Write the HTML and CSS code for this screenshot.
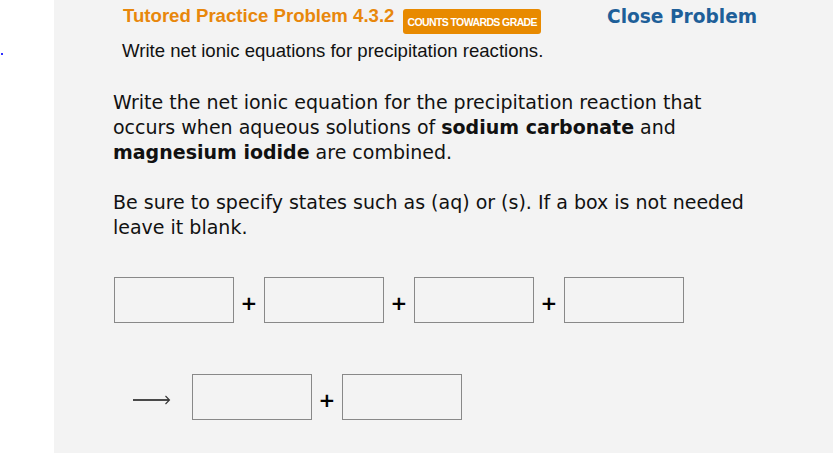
FILE: index.html
```html
<!DOCTYPE html>
<html>
<head>
<meta charset="utf-8">
<link rel="stylesheet" href="styles.css">
</head>
<body>
<div class="page">
  <div class="gutter"><span class="dot"></span></div>
  <main class="panel">
    <header class="head">
      <div class="title-group">
        <h1 class="title">Tutored Practice Problem 4.3.2</h1>
        <span class="badge">COUNTS TOWARDS GRADE</span>
      </div>
      <a class="close">Close Problem</a>
    </header>
    <p class="sub">Write net ionic equations for precipitation reactions.</p>
    <section class="question">
      <p>Write the net ionic equation for the precipitation reaction that occurs when aqueous solutions of <b>sodium carbonate</b> and <b>magnesium iodide</b> are combined.</p>
      <p>Be sure to specify states such as (aq) or (s). If a box is not needed leave it blank.</p>
    </section>
    <div class="eq-row reactants">
      <span class="box"></span><span class="plus">+</span><span class="box"></span><span class="plus">+</span><span class="box"></span><span class="plus">+</span><span class="box"></span>
    </div>
    <div class="eq-row products">
      <svg class="arrow" width="38" height="10" viewBox="0 0 38 10"><line x1="0" y1="5" x2="36" y2="5" stroke="#111" stroke-width="1.4"/><path d="M32.5 1 L36.5 5 L32.5 9" fill="none" stroke="#333" stroke-width="1.1"/></svg>
      <span class="box"></span><span class="plus">+</span><span class="box"></span>
    </div>
  </main>
</div>
</body>
</html>
```

FILE: styles.css
```css
html, body {
  margin: 0;
  padding: 0;
  background: #ffffff;
}
.page {
  display: flex;
  width: 833px;
  height: 453px;
  overflow: hidden;
}
.gutter {
  width: 54px;
  flex: none;
  padding-top: 53px;
  box-sizing: border-box;
}
.dot {
  display: block;
  width: 2px;
  height: 2px;
  margin-left: 1px;
  background: #3030ff;
}
.panel {
  flex: 1;
  background: #f3f3f3;
  padding-left: 59px;
  box-sizing: border-box;
}
.head {
  display: flex;
  align-items: flex-start;
  padding-top: 5px;
  height: 40px;
  box-sizing: border-box;
}
.title-group {
  display: flex;
  align-items: flex-start;
  padding-left: 10px;
  width: 484px;
}
.title {
  margin: 0;
  font-family: "Liberation Sans", Arial, sans-serif;
  font-weight: bold;
  font-size: 18.6px;
  line-height: 22px;
  color: #e8870b;
}
.badge {
  margin-left: 9px;
  margin-top: 4px;
  height: 25px;
  padding: 0 4px;
  display: flex;
  align-items: center;
  background: #e88a00;
  border-radius: 3px;
  color: #fff;
  font-family: "Liberation Sans", Arial, sans-serif;
  font-weight: bold;
  font-size: 10.5px;
  letter-spacing: -0.6px;
}
.close {
  font-family: "DejaVu Sans", Verdana, sans-serif;
  font-weight: bold;
  font-size: 18.6px;
  line-height: 22px;
  color: #1e5f99;
  margin-top: 1px;
}
.sub {
  margin: 0;
  padding-left: 9px;
  font-family: "Liberation Sans", Arial, sans-serif;
  font-size: 18.6px;
  line-height: 22px;
  color: #111;
}
.question {
  margin-top: 28px;
  width: 642px;
  font-family: "DejaVu Sans", Verdana, sans-serif;
  font-size: 19px;
  line-height: 25px;
  color: #111;
}
.question p {
  margin: 0 0 25px 0;
}
.question p:last-child {
  margin-bottom: 0;
}
.eq-row {
  display: flex;
  align-items: center;
}
.reactants {
  margin-top: 37px;
  padding-left: 1px;
}
.products {
  margin-top: 51px;
  padding-left: 20px;
}
.box {
  width: 120px;
  height: 46px;
  box-sizing: border-box;
  border: 1px solid #888;
  background: #f3f3f3;
}
.plus {
  width: 30px;
  text-align: center;
  font-family: "DejaVu Sans", Verdana, sans-serif;
  font-weight: bold;
  font-size: 20px;
  line-height: 20px;
  color: #000;
  padding-top: 5px;
}
.arrow {
  margin-right: 21px;
  margin-top: 6px;
}
```
